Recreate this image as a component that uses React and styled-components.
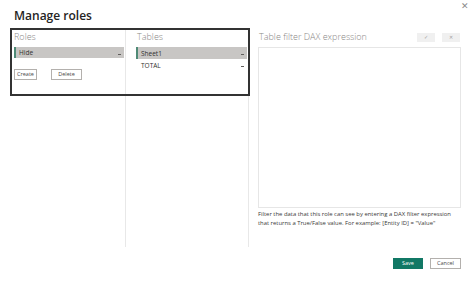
import React from "react";
import styled, { createGlobalStyle } from "styled-components";

const Global = createGlobalStyle`
  html, body { margin: 0; padding: 0; background: #fff; }
  body { font-family: "Open Sans", "Noto Sans", Arial, sans-serif; }
`;

const Page = styled.div`
  position: relative;
  width: 474px;
  height: 284px;
  background: #fff;
  overflow: hidden;
`;

const Header = styled.div`
  height: 29px;
  display: flex;
  justify-content: space-between;
  align-items: flex-start;
  padding: 0 5px 0 14px;
  box-sizing: border-box;
`;

const Title = styled.h1`
  margin: 0;
  padding-top: 7px;
  font-size: 12px;
  line-height: 17px;
  font-weight: 600;
  color: #252423;
`;

const Close = styled.span`
  padding-top: 1px;
  font-size: 9px;
  line-height: 10px;
  color: #8a8a8a;
`;

const Body = styled.div`
  display: flex;
  margin-left: 11px;
  height: 218px;
`;

const Column = styled.div`
  width: ${(p) => p.$w}px;
  border-right: ${(p) => (p.$divider ? "1px solid #e8e8e8" : "none")};
  padding-left: ${(p) => p.$pl || 0}px;
  margin-left: ${(p) => p.$ml || 0}px;
  box-sizing: border-box;
  display: flex;
  flex-direction: column;
`;

const Label = styled.div`
  font-size: 9px;
  font-weight: 300;
  line-height: 12px;
  padding-top: 2px;
  padding-left: ${(p) => p.$pl || 0}px;
  color: #8a8886;
  height: 16px;
`;

const ListRow = styled.div`
  display: flex;
  align-items: center;
  justify-content: space-between;
  height: ${(p) => p.$h || 11}px;
  margin-right: ${(p) => p.$mr || 0}px;
  padding: 0 3px 0 ${(p) => (p.$selected ? 3 : 5)}px;
  background: ${(p) => (p.$selected ? "#c8c6c4" : "transparent")};
  border-left: ${(p) => (p.$selected ? "2px solid #4f8a76" : "none")};
  font-size: 6.5px;
  color: #323130;
`;

const Dash = styled.span`
  width: 3px;
  height: 1px;
  background: #605e5c;
  margin-top: 3px;
`;

const ButtonRow = styled.div`
  display: flex;
  gap: 14px;
  margin-top: 11px;
`;

const Btn = styled.button`
  width: ${(p) => p.$w}px;
  height: 11px;
  padding: 0;
  border: 1px solid ${(p) => (p.$primary ? "#117865" : "#b3b0ad")};
  background: ${(p) => (p.$primary ? "#117865" : "#fff")};
  color: ${(p) => (p.$primary ? "#fff" : "#4a4a4a")};
  font-family: inherit;
  font-size: 5.5px;
  line-height: 9px;
  box-sizing: border-box;
`;

const DaxHead = styled.div`
  display: flex;
  justify-content: space-between;
  align-items: flex-start;
  height: 18px;
`;

const IconBtns = styled.div`
  display: flex;
  gap: 7px;
  padding-top: 4px;
  padding-right: 1px;
`;

const IconBtn = styled.div`
  width: 18px;
  height: 9px;
  background: #f0f0f0;
  color: #a0a0a0;
  font-size: 5px;
  line-height: 9px;
  text-align: center;
`;

const Editor = styled.div`
  height: 161px;
  border: 1px solid #e6e6e6;
  box-sizing: border-box;
`;

const Help = styled.p`
  margin: 2px 0 0;
  font-size: 5.9px;
  line-height: 9px;
  color: #3b3a39;
`;

const Footer = styled.div`
  display: flex;
  justify-content: flex-end;
  gap: 7px;
  margin-top: 11px;
  padding-right: 13px;
`;

const Highlight = styled.div`
  position: absolute;
  left: 10px;
  top: 28px;
  width: 240px;
  height: 68px;
  border: 2px solid #333;
  box-sizing: border-box;
  pointer-events: none;
`;

export default function App() {
  return (
    <>
      <Global />
      <Page>
        <Header>
          <Title>Manage roles</Title>
          <Close>✕</Close>
        </Header>
        <Body>
          <Column $w={115} $divider $pl={3}>
            <Label>Roles</Label>
            <ListRow $selected $mr={1}>
              <span>Hide</span>
              <Dash />
            </ListRow>
            <ButtonRow>
              <Btn $w={23}>Create</Btn>
              <Btn $w={31}>Delete</Btn>
            </ButtonRow>
          </Column>
          <Column $w={123} $divider $pl={10}>
            <Label $pl={1}>Tables</Label>
            <ListRow $selected $h={12} $mr={1}>
              <span>Sheet1</span>
              <Dash />
            </ListRow>
            <ListRow $h={12} $mr={1}>
              <span>TOTAL</span>
              <Dash />
            </ListRow>
          </Column>
          <Column $w={203} $ml={9}>
            <DaxHead>
              <Label $pl={1}>Table filter DAX expression</Label>
              <IconBtns>
                <IconBtn>✓</IconBtn>
                <IconBtn>✕</IconBtn>
              </IconBtns>
            </DaxHead>
            <Editor />
            <Help>
              Filter the data that this role can see by entering a DAX filter expression
              <br />
              that returns a True/False value. For example: [Entity ID] = "Value"
            </Help>
          </Column>
        </Body>
        <Footer>
          <Btn $primary $w={30}>Save</Btn>
          <Btn $w={31}>Cancel</Btn>
        </Footer>
        <Highlight />
      </Page>
    </>
  );
}
